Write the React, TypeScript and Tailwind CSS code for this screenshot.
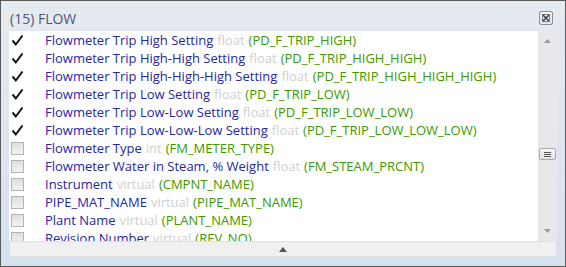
import React from 'react';

type Field = { label: string; type: string; column: string; checked: boolean };

const FIELDS: Field[] = [
  { label: 'Flowmeter Trip High Setting', type: 'float', column: 'PD_F_TRIP_HIGH', checked: true },
  { label: 'Flowmeter Trip High-High Setting', type: 'float', column: 'PD_F_TRIP_HIGH_HIGH', checked: true },
  { label: 'Flowmeter Trip High-High-High Setting', type: 'float', column: 'PD_F_TRIP_HIGH_HIGH_HIGH', checked: true },
  { label: 'Flowmeter Trip Low Setting', type: 'float', column: 'PD_F_TRIP_LOW', checked: true },
  { label: 'Flowmeter Trip Low-Low Setting', type: 'float', column: 'PD_F_TRIP_LOW_LOW', checked: true },
  { label: 'Flowmeter Trip Low-Low-Low Setting', type: 'float', column: 'PD_F_TRIP_LOW_LOW_LOW', checked: true },
  { label: 'Flowmeter Type', type: 'int', column: 'FM_METER_TYPE', checked: false },
  { label: 'Flowmeter Water in Steam, % Weight', type: 'float', column: 'FM_STEAM_PRCNT', checked: false },
  { label: 'Instrument', type: 'virtual', column: 'CMPNT_NAME', checked: false },
  { label: 'PIPE_MAT_NAME', type: 'virtual', column: 'PIPE_MAT_NAME', checked: false },
  { label: 'Plant Name', type: 'virtual', column: 'PLANT_NAME', checked: false },
  { label: 'Revision Number', type: 'virtual', column: 'REV_NO', checked: false },
];

const CheckBox = ({ checked }: { checked: boolean }) =>
  checked ? (
    <div className="w-[13px] h-[13px] flex items-center justify-center">
      <svg width="13" height="13" viewBox="0 0 13 13">
        <path d="M1.5 6.5 L4.8 10.5 L11.5 1.5" fill="none" stroke="#111" strokeWidth="2" />
      </svg>
    </div>
  ) : (
    <div className="w-[13px] h-[13px] border border-[#b4b4b4] bg-gradient-to-b from-[#e0e0e0] to-[#f2f2f2]" />
  );

export default function App() {
  return (
    <div
      className="w-[566px] h-[267px] border border-[#5a5a5a] bg-gradient-to-b from-[#e6eaf0] to-[#d5e1ef] flex flex-col overflow-hidden"
      style={{ fontFamily: '"Open Sans", "Noto Sans", sans-serif' }}
    >
      {/* Header */}
      <div className="h-[30px] flex items-end justify-between pl-[9px] pr-[12px] pb-[2px]">
        <span className="text-[14px] leading-[20px] text-[#4a5872]">(15) FLOW</span>
        <div className="mb-[4px] w-[14px] h-[14px] border border-[#8a8f98] rounded-[2px] bg-gradient-to-b from-[#f4f6f9] to-[#dde3ea] flex items-center justify-center">
          <svg width="8" height="8" viewBox="0 0 8 8">
            <path d="M1 1 L7 7 M7 1 L1 7" stroke="#444" strokeWidth="1.6" />
            <rect x="0.5" y="0.5" width="7" height="7" fill="none" stroke="#666" strokeWidth="0.8" />
          </svg>
        </div>
      </div>

      {/* List + scrollbar */}
      <div className="mx-[8px] h-[210px] flex">
        <div className="flex-1 bg-white overflow-hidden">
          {FIELDS.map(f => (
            <div key={f.column} className="h-[18px] flex items-center pl-[2px] whitespace-nowrap text-[13px] leading-[18px]">
              <CheckBox checked={f.checked} />
              <span className="ml-[21px] text-[#2626a8]">{f.label}</span>
              <span className="ml-[4px] text-[#cfcfcf]">{f.type}</span>
              <span className="ml-[4px] text-[#3a9a00]">({f.column})</span>
            </div>
          ))}
        </div>
        <div className="w-[19px] bg-[#e8e8ec] flex flex-col items-center">
          <div className="h-[20px] flex items-center justify-center">
            <svg width="7" height="4" viewBox="0 0 7 4"><path d="M0 4 L3.5 0 L7 4 Z" fill="#9a9a9a" /></svg>
          </div>
          <div className="flex-1 w-full flex flex-col items-center">
            <div className="mt-[97px] w-[17px] h-[12px] border border-[#a8a8a8] rounded-[2px] bg-gradient-to-b from-[#f8f8f8] to-[#e2e2e2] flex flex-col items-center justify-center gap-[1px]">
              <div className="w-[7px] h-[1px] bg-[#555]" />
              <div className="w-[7px] h-[1px] bg-[#555]" />
              <div className="w-[7px] h-[1px] bg-[#555]" />
            </div>
          </div>
          <div className="h-[20px] flex items-center justify-center">
            <svg width="7" height="4" viewBox="0 0 7 4"><path d="M0 0 L7 0 L3.5 4 Z" fill="#9a9a9a" /></svg>
          </div>
        </div>
      </div>

      {/* Bottom bar */}
      <div className="mx-[8px] h-[16px] bg-[#f0f0f0] border border-[#e0e0e0] rounded-b-[2px] flex items-center justify-center">
        <svg width="8" height="5" viewBox="0 0 8 5"><path d="M0 5 L4 0 L8 5 Z" fill="#555" /></svg>
      </div>
    </div>
  );
}
